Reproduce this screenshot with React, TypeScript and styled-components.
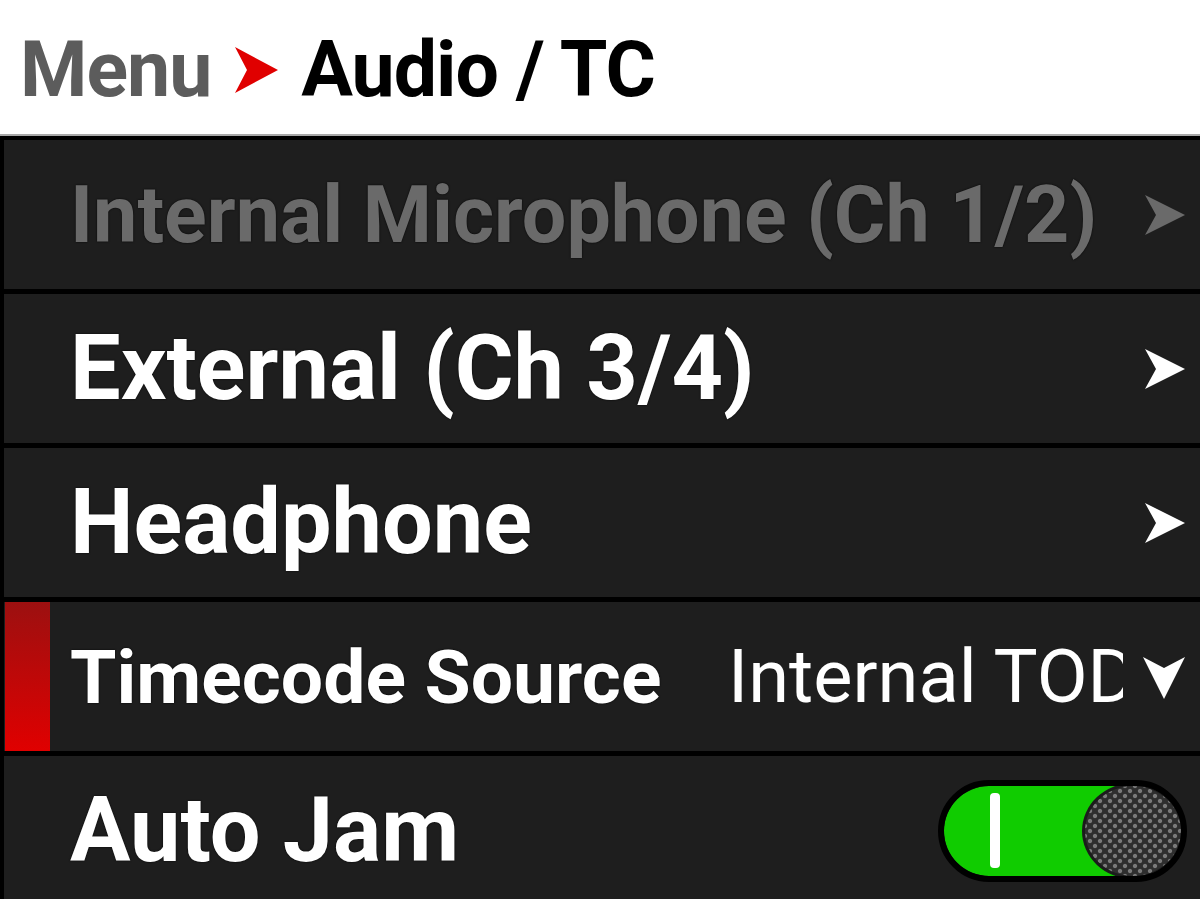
import React from "react";
import styled, { createGlobalStyle } from "styled-components";

const GlobalStyle = createGlobalStyle`
  html, body {
    margin: 0;
    padding: 0;
    background: #ffffff;
    font-family: Roboto, "Liberation Sans", sans-serif;
  }
`;

const Screen = styled.div`
  width: 1200px;
  height: 899px;
  overflow: hidden;
  display: flex;
  flex-direction: column;
  background: #ffffff;
`;

const Header = styled.div`
  flex-shrink: 0;
  height: 128px;
  padding-top: 6px;
  display: flex;
  align-items: center;
  gap: 22px;
  padding-left: 20px;
  border-bottom: 2px solid #a8a8a8;
  font-weight: 700;
  font-size: 77px;
  letter-spacing: -1px;
`;

const Crumb = styled.span<{ $current?: boolean }>`
  color: ${p => (p.$current ? "#000000" : "#5c5c5c")};
`;

const List = styled.div`
  flex-shrink: 0;
  display: flex;
  flex-direction: column;
  gap: 5px;
  background: #000000;
  border-top: 4px solid #000000;
  padding-left: 4px;
`;

const Row = styled.div`
  height: 149px;
  flex-shrink: 0;
  display: flex;
  align-items: center;
  background: #1e1e1e;
  padding-right: 13px;
`;

const Marker = styled.div<{ $active?: boolean }>`
  align-self: stretch;
  width: 45px;
  margin-left: 1px;
  margin-right: 20px;
  background: ${p =>
    p.$active ? "linear-gradient(#9c1010, #e00000)" : "transparent"};
`;

const Label = styled.div<{ $dim?: boolean; $size: number }>`
  flex: 1;
  font-size: ${p => p.$size}px;
  font-weight: 700;
  color: ${p => (p.$dim ? "#6a6a6a" : "#ffffff")};
  text-shadow: 0 0 2px #000;
  white-space: nowrap;
`;

const Value = styled.div`
  width: 395px;
  overflow: hidden;
  white-space: nowrap;
  font-size: 74px;
  font-weight: 400;
  color: #ffffff;
  margin-right: 18px;
`;

const Icon = styled.svg`
  flex-shrink: 0;
  display: block;
`;

const Toggle = styled.div`
  width: 237px;
  height: 90px;
  border: 6px solid #000;
  border-radius: 51px;
  background: #111;
  display: flex;
  align-items: center;
  overflow: hidden;
`;

const Track = styled.div`
  flex: 1;
  align-self: stretch;
  background: #10cc00;
  border-radius: 45px 0 0 45px;
  margin-right: -48px;
  display: flex;
  align-items: center;
  padding-left: 46px;
`;

const OnMark = styled.div`
  width: 10px;
  height: 75px;
  border-radius: 4px;
  background: #ffffff;
`;

const Knob = styled.div`
  position: relative;
  width: 96px;
  height: 90px;
  border-radius: 50%;
  background-color: #2e2e2e;
  background-image: radial-gradient(circle, #7a7a7a 1.6px, transparent 2.6px),
    radial-gradient(circle, #7a7a7a 1.6px, transparent 2.6px);
  background-size: 10px 10px;
  background-position: 0 0, 5px 5px;
  box-shadow: 0 0 0 3px #1b1b1b;
`;

function NextArrow({ color }: { color: string }) {
  return (
    <Icon width="44" height="44" viewBox="0 0 44 44">
      <path d="M2 2 L42 22 L2 42 L13 22 Z" fill={color} />
    </Icon>
  );
}

function DownArrow() {
  return (
    <Icon width="46" height="48" viewBox="0 0 46 48">
      <path d="M2 4 L23 46 L44 4 L23 15 Z" fill="#ffffff" />
    </Icon>
  );
}

function CrumbArrow() {
  return (
    <Icon width="46" height="50" viewBox="0 0 46 50">
      <path d="M2 2 L45 25 L2 48 L14 25 Z" fill="#e00000" />
    </Icon>
  );
}

export default function App() {
  return (
    <Screen>
      <GlobalStyle />
      <Header>
        <Crumb>Menu</Crumb>
        <CrumbArrow />
        <Crumb $current>Audio / TC</Crumb>
      </Header>
      <List>
        <Row>
          <Marker />
          <Label $dim $size={79}>
            Internal Microphone (Ch 1/2)
          </Label>
          <NextArrow color="#6a6a6a" />
        </Row>
        <Row>
          <Marker />
          <Label $size={90}>External (Ch 3/4)</Label>
          <NextArrow color="#ffffff" />
        </Row>
        <Row>
          <Marker />
          <Label $size={90}>Headphone</Label>
          <NextArrow color="#ffffff" />
        </Row>
        <Row>
          <Marker $active />
          <Label $size={75}>Timecode Source</Label>
          <Value>Internal TOD</Value>
          <DownArrow />
        </Row>
        <Row>
          <Marker />
          <Label $size={90}>Auto Jam</Label>
          <Toggle>
            <Track>
              <OnMark />
            </Track>
            <Knob />
          </Toggle>
        </Row>
      </List>
    </Screen>
  );
}
